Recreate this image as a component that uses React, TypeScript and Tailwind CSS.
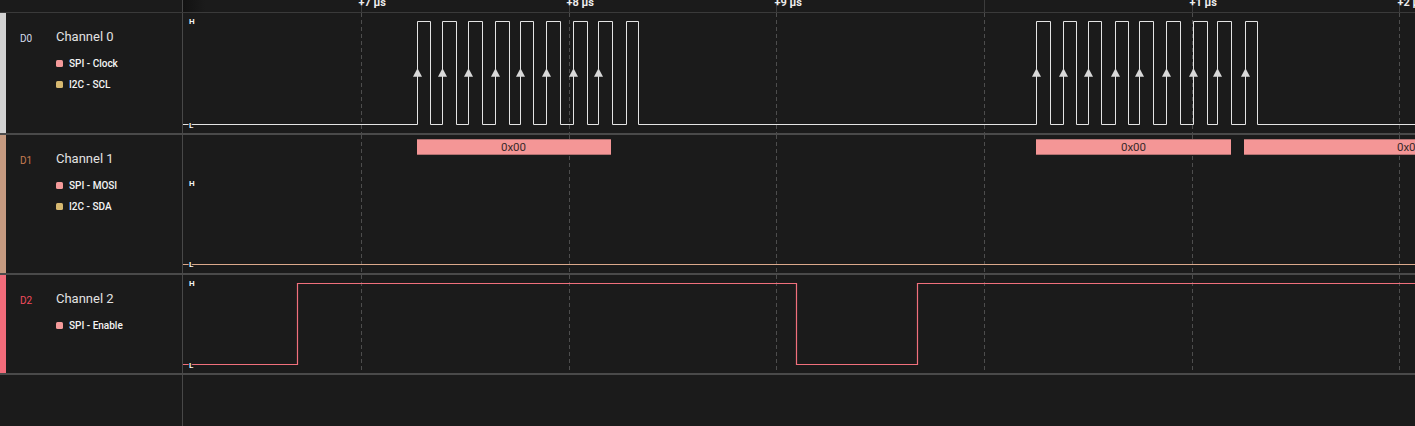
import React from "react";

const W = 1232;
const GRID = [178.5, 386.5, 593.5, 801.5, 1009.5, 1216.5];
const RULER = [
  { x: 361, t: "+7 µs" },
  { x: 569, t: "+8 µs" },
  { x: 777, t: "+9 µs" },
  { x: 1192, t: "+1 µs" },
  { x: 1400, t: "+2 µs" },
];

const L = (g: number) => g - 183 + 0.5;

const RISE1 = [417, 442, 468, 495, 520, 546, 573, 598, 626];
const FALL1 = [430, 456, 482, 509, 533, 560, 587, 612, 638];
const RISE2 = [1036, 1063, 1088, 1115, 1139, 1166, 1193, 1217, 1245];
const FALL2 = [1050, 1076, 1101, 1128, 1153, 1180, 1207, 1231, 1257];

function clockPath(hi: number, lo: number) {
  let d = `M0 ${lo}`;
  const rises = [...RISE1, ...RISE2];
  const falls = [...FALL1, ...FALL2];
  rises.forEach((r, i) => {
    d += ` H${L(r)} V${hi} H${L(falls[i])} V${lo}`;
  });
  d += ` H${W}`;
  return d;
}

function Grid({ h }: { h: number }) {
  return (
    <>
      {GRID.map((x) => (
        <line key={x} x1={x} x2={x} y1={0} y2={h} stroke="#4d4d4d" strokeWidth={1} strokeDasharray="4 3" />
      ))}
    </>
  );
}

function Lvl({ x, y, t }: { x: number; y: number; t: string }) {
  return (
    <text
      x={x}
      y={y}
      fontSize={8}
      fontWeight={700}
      fill="#f2f2f2"
      stroke="#1b1b1b"
      strokeWidth={2}
      paintOrder="stroke"
      fontFamily="Roboto, 'Liberation Sans', sans-serif"
    >
      {t}
    </text>
  );
}

type Item = { color: string; label: string };

function Side({
  id,
  idColor,
  strip,
  name,
  items,
}: {
  id: string;
  idColor: string;
  strip: string;
  name: string;
  items: Item[];
}) {
  return (
    <div className="w-[183px] shrink-0 border-r border-[#484848] flex h-full">
      <div className={`w-[6px] h-full ${strip}`} />
      <div className="w-[50px] pl-[14px]">
        <div className={`mt-[20px] text-[10px] leading-[12px] ${idColor}`}>{id}</div>
      </div>
      <div className="flex flex-col">
        <div className="mt-[16px] h-[16px] text-[13px] leading-[16px] text-[#e2e2e2]">{name}</div>
        <div className="mt-[8px] flex flex-col">
          {items.map((it) => (
            <div key={it.label} className="h-[21px] flex items-center gap-[6px]">
              <span className={`w-[7px] h-[7px] rounded-[1.5px] ${it.color}`} />
              <span className="text-[10px] leading-[21px] font-medium text-[#f4f4f4]">{it.label}</span>
            </div>
          ))}
        </div>
      </div>
    </div>
  );
}

export default function App() {
  return (
    <div
      className="w-[1415px] h-[426px] bg-[#1b1b1b] overflow-hidden flex flex-col"
      style={{ fontFamily: "Roboto, 'Liberation Sans', sans-serif" }}
    >
      {/* Ruler */}
      <div className="h-[13px] shrink-0 flex border-b border-[#3a3a3a]">
        <div className="w-[183px] shrink-0 border-r border-[#484848]" />
        <div className="flex-1 relative overflow-hidden">
          <div className="absolute left-0 top-0 h-full w-[22px] bg-gradient-to-r from-[#121212] to-transparent" />
          <svg width={W} height={12} className="absolute left-0 top-0">
            {GRID.map((x) => (
              <line key={x} x1={x} x2={x} y1={0} y2={12} stroke="#3c3c3c" strokeWidth={1} />
            ))}
          </svg>
          {RULER.map((r) => (
            <span
              key={r.t + r.x}
              className="absolute top-[-3px] text-[11px] leading-[11px] font-bold text-[#ececec] whitespace-nowrap"
              style={{ left: r.x - 183 - 2.5 }}
            >
              {r.t}
            </span>
          ))}
        </div>
      </div>

      {/* Channel 0 */}
      <div className="h-[122px] shrink-0 flex border-b-2 border-[#4a4a4a]">
        <Side
          id="D0"
          idColor="text-[#d3dbea]"
          strip="bg-[#d2d2d2]"
          name="Channel 0"
          items={[
            { color: "bg-[#f49a9a]", label: "SPI - Clock" },
            { color: "bg-[#d6b870]", label: "I2C - SCL" },
          ]}
        />
        <div className="flex-1 overflow-hidden">
          <svg width={W} height={120} className="block">
            <Grid h={120} />
            <path d={clockPath(8.5, 111.5)} fill="none" stroke="#e4e4e4" strokeWidth={1} />
            {[...RISE1.slice(0, 8), ...RISE2].map((r) => {
              const x = L(r);
              return <polygon key={r} points={`${x - 4.5},63.7 ${x + 4.5},63.7 ${x},55.3`} fill="#d9d9d9" />;
            })}
            <Lvl x={6} y={10.5} t="H" />
            <Lvl x={6} y={114.7} t="L" />
          </svg>
        </div>
      </div>

      {/* Channel 1 */}
      <div className="h-[140px] shrink-0 flex border-b-2 border-[#4a4a4a]">
        <Side
          id="D1"
          idColor="text-[#c97c52]"
          strip="bg-[#c59a80]"
          name="Channel 1"
          items={[
            { color: "bg-[#f49a9a]", label: "SPI - MOSI" },
            { color: "bg-[#d6b870]", label: "I2C - SDA" },
          ]}
        />
        <div className="flex-1 overflow-hidden">
          <svg width={W} height={138} className="block">
            <Grid h={138} />
            {[
              { a: 417, b: 611, c: 513.5 },
              { a: 1036, b: 1231, c: 1133.5 },
              { a: 1244, b: 1575, c: 1409.5 },
            ].map((bx) => (
              <g key={bx.a}>
                <rect x={bx.a - 183} y={4.3} width={bx.b - bx.a} height={15.4} fill="#f49696" />
                <text
                  x={bx.c - 183}
                  y={16}
                  textAnchor="middle"
                  fontSize={11.5}
                  fill="#3a2a2a"
                  fontFamily="Roboto, 'Liberation Sans', sans-serif"
                >
                  0x00
                </text>
              </g>
            ))}
            <path d={`M0 129.5 H${W}`} fill="none" stroke="#dba98c" strokeWidth={1} />
            <Lvl x={6} y={50.5} t="H" />
            <Lvl x={6} y={132.3} t="L" />
          </svg>
        </div>
      </div>

      {/* Channel 2 */}
      <div className="h-[100px] shrink-0 flex border-b-2 border-[#4a4a4a]">
        <Side
          id="D2"
          idColor="text-[#f24c5e]"
          strip="bg-[#f26b7a]"
          name="Channel 2"
          items={[{ color: "bg-[#f49a9a]", label: "SPI - Enable" }]}
        />
        <div className="flex-1 overflow-hidden">
          <svg width={W} height={98} className="block">
            <Grid h={98} />
            <path
              d={`M0 89.5 H${L(297)} V8.5 H${L(796)} V89.5 H${L(917)} V8.5 H${W}`}
              fill="none"
              stroke="#f0707c"
              strokeWidth={1.2}
            />
            <Lvl x={6} y={11} t="H" />
            <Lvl x={6} y={92.7} t="L" />
          </svg>
        </div>
      </div>

      {/* Empty rest */}
      <div className="flex-1 flex">
        <div className="w-[183px] shrink-0 border-r border-[#484848]" />
        <div className="flex-1" />
      </div>
    </div>
  );
}
